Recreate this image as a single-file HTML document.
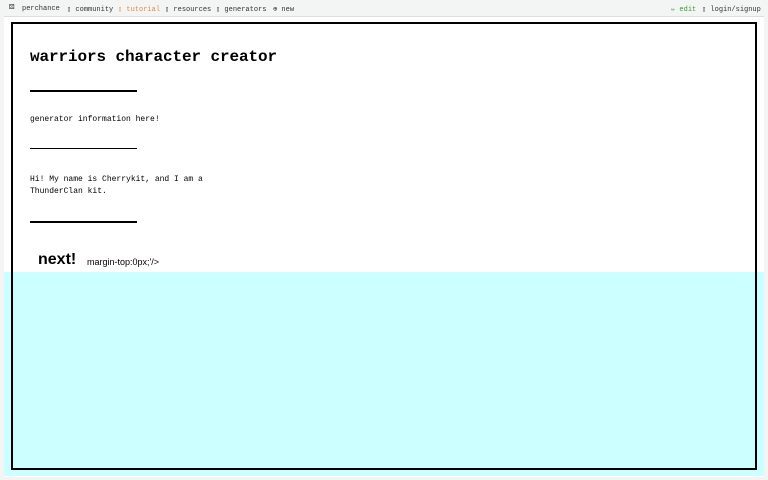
<!DOCTYPE html>
<html><head><style>
body{margin:0;width:768px;height:480px;background:#f3f5f5;position:relative;overflow:hidden;font-family:"Liberation Mono",monospace;}
.nav{position:absolute;top:0;left:0;width:768px;height:16px;font-size:7px;color:#333;}
.nav span{position:absolute;top:5px;white-space:nowrap}
.page{position:absolute;left:4px;top:16px;width:760px;height:460px;background:#fff;border-top:1px solid #ddd;}
.cyan{position:absolute;left:4px;top:272px;width:760px;height:204px;background:#ccffff;}
.box{position:absolute;left:11px;top:22px;width:742px;height:444px;border:2px solid #000;}
h1{position:absolute;left:30px;top:48px;margin:0;font-size:16px;font-weight:bold;color:#000;letter-spacing:-0.1px}
.hr{position:absolute;left:30px;height:2px;background:#000;width:107px}
.t{position:absolute;left:30px;font-size:8px;line-height:12px;color:#000}
</style></head><body>
<div class="nav">
<span style="left:9px;font-size:9px;top:2px">⚄</span>
<span style="left:22px">perchance</span>
<span style="left:67px">▯ community</span>
<span style="left:118px;color:#e88a3a">▯ tutorial</span>
<span style="left:165px">▯ resources</span>
<span style="left:216px">▯ generators</span>
<span style="left:273px">⊕ new</span>
<span style="left:671px;color:#3a9a3a">✏ edit</span>
<span style="left:702px">▯ login/signup</span>
</div>
<div class="page"></div>
<div class="cyan"></div>
<div class="box"></div>
<h1>warriors character creator</h1>
<div class="hr" style="top:90px"></div>
<div class="t" style="top:114px">generator information here!</div>
<div class="hr" style="top:148px;height:1px"></div>
<div class="t" style="top:174px">Hi! My name is Cherrykit, and I am a<br>ThunderClan kit.</div>
<div class="hr" style="top:221px"></div>
<div style="position:absolute;left:38px;top:251px;font-family:'Liberation Sans',sans-serif;font-weight:bold;font-size:16px">next!</div>
<div style="position:absolute;left:87px;top:257px;font-family:'Liberation Sans',sans-serif;font-size:9px">margin-top:0px;'/&gt;</div>
</body></html>
